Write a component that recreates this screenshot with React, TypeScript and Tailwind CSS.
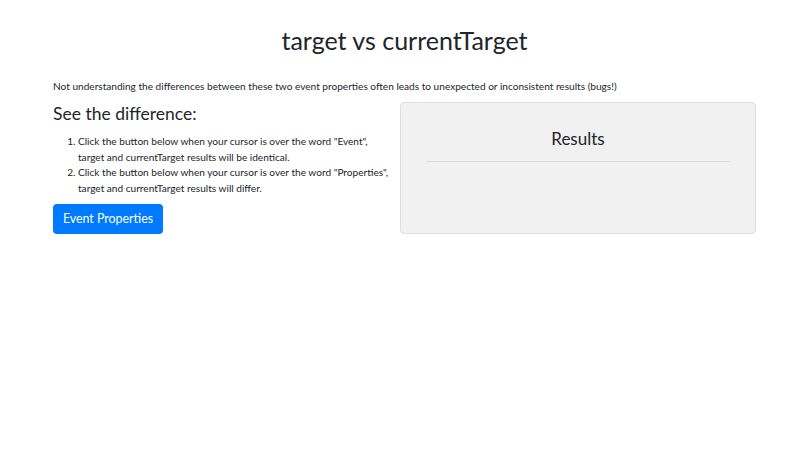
export default function App() {
  return (
    <div className="w-[800px] h-[450px] bg-white text-[#212529]" style={{ fontFamily: 'Lato, "Noto Sans", sans-serif' }}>
      <div className="ml-[53px] w-[703px] pt-[24px]">
        <h1 className="text-center text-[25px] leading-[32px] font-normal">target vs currentTarget</h1>
        <p className="mt-[22px] text-[10.1px] leading-[16px]">Not understanding the differences between these two event properties often leads to unexpected or inconsistent results (bugs!)</p>
        <div className="mt-[8px] flex gap-[7px]">
          <div className="w-[340px]">
            <h2 className="text-[17.5px] leading-[24px] font-normal">See the difference:</h2>
            <ol className="mt-[8px] pl-[25px] list-decimal text-[10.1px] leading-[15.5px]">
              <li>Click the button below when your cursor is over the word "Event", target and currentTarget results will be identical.</li>
              <li>Click the button below when your cursor is over the word "Properties", target and currentTarget results will differ.</li>
            </ol>
            <button className="mt-[8px] h-[30px] w-[110px] rounded-[4px] bg-[#007bff] text-white text-[12.4px]">Event Properties</button>
          </div>
          <div className="flex-1 h-[132px] bg-[#f1f1f1] border border-[#dedede] rounded-[4px] px-[25px] pt-[24px]">
            <div className="text-center text-[17px] leading-[24px]">Results</div>
            <div className="mt-[10px] border-t border-[#dcdcdc]" />
          </div>
        </div>
      </div>
    </div>
  );
}
